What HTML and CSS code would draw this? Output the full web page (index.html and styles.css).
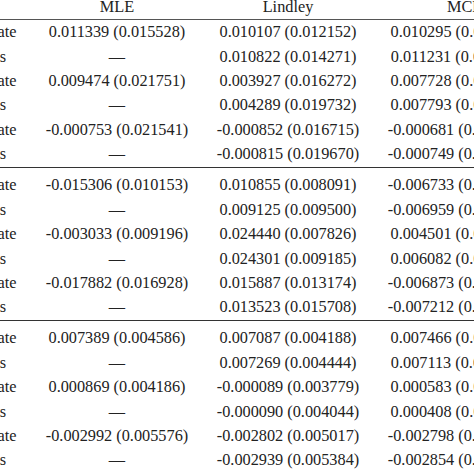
FILE: index.html
```html
<!DOCTYPE html>
<html>
<head>
<meta charset="utf-8">
<link rel="stylesheet" href="styles.css">
</head>
<body>
<div class="table">
  <div class="grid head">
    <div class="cell"></div>
    <div class="cell">MLE</div>
    <div class="cell">Lindley</div>
    <div class="cell mcmc">MCMC</div>
  </div>
  <div class="grid section">
    <div class="cell label">Estimate</div><div class="cell">0.011339 (0.015528)</div><div class="cell">0.010107 (0.012152)</div><div class="cell">0.010295 (0.012433)</div>
    <div class="cell label">Risks</div><div class="cell">—</div><div class="cell">0.010822 (0.014271)</div><div class="cell">0.011231 (0.014512)</div>
    <div class="cell label">Estimate</div><div class="cell">0.009474 (0.021751)</div><div class="cell">0.003927 (0.016272)</div><div class="cell">0.007728 (0.017004)</div>
    <div class="cell label">Risks</div><div class="cell">—</div><div class="cell">0.004289 (0.019732)</div><div class="cell">0.007793 (0.019318)</div>
    <div class="cell label">Estimate</div><div class="cell">-0.000753 (0.021541)</div><div class="cell">-0.000852 (0.016715)</div><div class="cell">-0.000681 (0.016920)</div>
    <div class="cell label">Risks</div><div class="cell">—</div><div class="cell">-0.000815 (0.019670)</div><div class="cell">-0.000749 (0.019201)</div>
  </div>
  <div class="grid section">
    <div class="cell label">Estimate</div><div class="cell">-0.015306 (0.010153)</div><div class="cell">0.010855 (0.008091)</div><div class="cell">-0.006733 (0.008412)</div>
    <div class="cell label">Risks</div><div class="cell">—</div><div class="cell">0.009125 (0.009500)</div><div class="cell">-0.006959 (0.009377)</div>
    <div class="cell label">Estimate</div><div class="cell">-0.003033 (0.009196)</div><div class="cell">0.024440 (0.007826)</div><div class="cell">0.004501 (0.008105)</div>
    <div class="cell label">Risks</div><div class="cell">—</div><div class="cell">0.024301 (0.009185)</div><div class="cell">0.006082 (0.009264)</div>
    <div class="cell label">Estimate</div><div class="cell">-0.017882 (0.016928)</div><div class="cell">0.015887 (0.013174)</div><div class="cell">-0.006873 (0.013590)</div>
    <div class="cell label">Risks</div><div class="cell">—</div><div class="cell">0.013523 (0.015708)</div><div class="cell">-0.007212 (0.015433)</div>
  </div>
  <div class="grid section">
    <div class="cell label">Estimate</div><div class="cell">0.007389 (0.004586)</div><div class="cell">0.007087 (0.004188)</div><div class="cell">0.007466 (0.004261)</div>
    <div class="cell label">Risks</div><div class="cell">—</div><div class="cell">0.007269 (0.004444)</div><div class="cell">0.007113 (0.004392)</div>
    <div class="cell label">Estimate</div><div class="cell">0.000869 (0.004186)</div><div class="cell">-0.000089 (0.003779)</div><div class="cell">0.000583 (0.003842)</div>
    <div class="cell label">Risks</div><div class="cell">—</div><div class="cell">-0.000090 (0.004044)</div><div class="cell">0.000408 (0.004017)</div>
    <div class="cell label">Estimate</div><div class="cell">-0.002992 (0.005576)</div><div class="cell">-0.002802 (0.005017)</div><div class="cell">-0.002798 (0.005121)</div>
    <div class="cell label">Risks</div><div class="cell">—</div><div class="cell">-0.002939 (0.005384)</div><div class="cell">-0.002854 (0.005296)</div>
  </div>
</div>
</body>
</html>
```

FILE: styles.css
```css
html, body {
  margin: 0;
  padding: 0;
  background: #ffffff;
  overflow: hidden;
}
body {
  width: 474px;
  height: 474px;
  font-family: "Liberation Serif", "Times New Roman", serif;
  font-size: 16.3px;
  color: #222222;
}
.table {
  width: 600px;
  margin-left: -56px;
  margin-top: -5.2px;
}
.grid {
  display: grid;
  grid-template-columns: 88px 170px 172px 170px;
  grid-auto-rows: 24.4px;
}
.cell {
  line-height: 24.4px;
  text-align: center;
  white-space: nowrap;
}
.head {
  border-bottom: 1.4px solid #555555;
}
.head .mcmc {
  text-align: left;
  padding-left: 73px;
}
.section + .section {
  border-top: 1.6px solid #333333;
  padding-top: 5.8px;
}
```
